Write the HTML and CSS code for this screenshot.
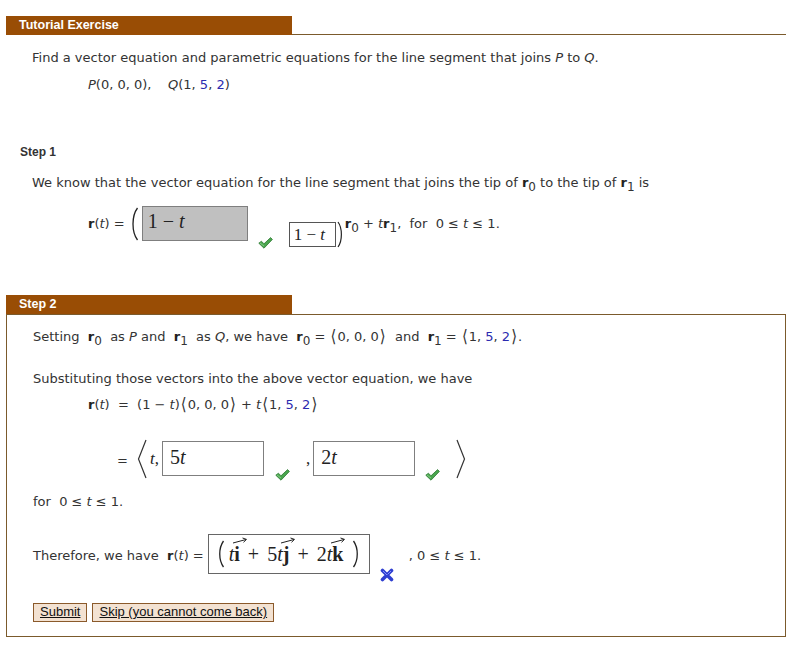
FILE: index.html
```html
<!DOCTYPE html>
<html>
<head>
<meta charset="utf-8">
<link rel="stylesheet" href="styles.css">
</head>
<body>
<div class="page">
  <div class="head">
    <div class="tab">Tutorial Exercise</div>
    <div class="rule"></div>
  </div>
  <div class="intro">
    <p class="q">Find a vector equation and parametric equations for the line segment that joins <i>P</i> to <i>Q</i>.</p>
    <p class="pts"><i>P</i>(0, 0, 0), &nbsp; &nbsp;<i>Q</i>(1, <span class="bl">5</span>, <span class="bl">2</span>)</p>
  </div>

  <div class="step1">
    <div class="steplabel">Step 1</div>
    <p class="know">We know that the vector equation for the line segment that joins the tip of <b class="vr">r</b><sub>0</sub> to the tip of <b class="vr">r</b><sub>1</sub> is</p>
    <div class="eq1">
      <span class="lhs"><b class="vr">r</b>(<i>t</i>) =</span>
      <svg class="paren-l" viewBox="0 0 9 34" width="9" height="34"><path d="M7.5 1 C1.5 9 1.5 25 7.5 33" fill="none" stroke="#222" stroke-width="1.3"/></svg>
      <span class="box gray"><span class="m">1 − <i>t</i></span></span>
      <svg class="chk c1" viewBox="0 0 15 12" width="15" height="12"><path d="M0.8 6.2 L3.4 4.2 L6 6.8 L12.6 0.6 L14.4 2.4 L6 11.2 Z" fill="#4aa64e" stroke="#2f7a33" stroke-width="0.8" stroke-linejoin="round"/><path d="M2 6 L6 9" stroke="#8fd592" stroke-width="0.8"/></svg>
      <span class="box sm"><span class="m ms">1 − <i>t</i></span></span>
      <svg class="paren-r" viewBox="0 0 7 27" width="7" height="27"><path d="M1 1 C5.5 7 5.5 20 1 26" fill="none" stroke="#222" stroke-width="1.2"/></svg>
      <span class="rest"><b class="vr">r</b><sub>0</sub> + <i>t</i><b class="vr">r</b><sub>1</sub>, &nbsp;for &nbsp;0 ≤ <i>t</i> ≤ 1.</span>
    </div>
  </div>

  <div class="step2">
    <div class="head2"><div class="tab">Step 2</div></div>
    <div class="panel">
      <p class="set">Setting &nbsp;<b class="vr">r</b><sub>0</sub> &nbsp;as <i>P</i> and &nbsp;<b class="vr">r</b><sub>1</sub> &nbsp;as <i>Q</i>, we have &nbsp;<b class="vr">r</b><sub>0</sub> = <span class="ab">⟨</span>0, 0, 0<span class="ab">⟩</span> &nbsp;and &nbsp;<b class="vr">r</b><sub>1</sub> = <span class="ab">⟨</span>1, <span class="bl">5</span>, <span class="bl">2</span><span class="ab">⟩</span>.</p>
      <p class="sub">Substituting those vectors into the above vector equation, we have</p>
      <p class="rt"><b class="vr">r</b>(<i>t</i>) &nbsp;= &nbsp;(1 − <i>t</i>)<span class="ab">⟨</span>0, 0, 0<span class="ab">⟩</span> + <i>t</i><span class="ab">⟨</span>1, <span class="bl">5</span>, <span class="bl">2</span><span class="ab">⟩</span></p>
      <div class="eq2">
        <span class="eqs">=</span>
        <svg class="ang al" viewBox="0 0 10 40" width="10" height="40"><polyline points="9,1 1.5,20 9,39" fill="none" stroke="#333" stroke-width="1.2"/></svg>
        <span class="tc"><i>t</i>,</span>
        <span class="box wb"><span class="m">5<i>t</i></span></span>
        <svg class="chk c2" viewBox="0 0 15 12" width="15" height="12"><path d="M0.8 6.2 L3.4 4.2 L6 6.8 L12.6 0.6 L14.4 2.4 L6 11.2 Z" fill="#4aa64e" stroke="#2f7a33" stroke-width="0.8" stroke-linejoin="round"/><path d="M2 6 L6 9" stroke="#8fd592" stroke-width="0.8"/></svg>
        <span class="cm">,</span>
        <span class="box wb b2"><span class="m">2<i>t</i></span></span>
        <svg class="chk c3" viewBox="0 0 15 12" width="15" height="12"><path d="M0.8 6.2 L3.4 4.2 L6 6.8 L12.6 0.6 L14.4 2.4 L6 11.2 Z" fill="#4aa64e" stroke="#2f7a33" stroke-width="0.8" stroke-linejoin="round"/><path d="M2 6 L6 9" stroke="#8fd592" stroke-width="0.8"/></svg>
        <svg class="ang ar" viewBox="0 0 10 40" width="10" height="40"><polyline points="1,1 8.5,20 1,39" fill="none" stroke="#333" stroke-width="1.2"/></svg>
      </div>
      <p class="for">for &nbsp;0 ≤ <i>t</i> ≤ 1.</p>
      <div class="eq3">
        <span class="thf">Therefore, we have &nbsp;<b class="vr">r</b>(<i>t</i>) =</span>
        <span class="box big">
          <svg class="bp" viewBox="0 0 8 28" width="8" height="28"><path d="M6.5 1 C1.5 8 1.5 20 6.5 27" fill="none" stroke="#222" stroke-width="1.3"/></svg>
          <span class="v"><i>t</i><b>i</b><svg class="arr" viewBox="0 0 16 8" width="16" height="8"><path d="M1 6 L14 2.5 M10.5 1 L14.5 2.4 L11.5 5.3" fill="none" stroke="#222" stroke-width="1"/></svg></span>
          <span class="op">+</span>
          <span class="n">5</span><span class="v"><i>t</i><b>j</b><svg class="arr" viewBox="0 0 16 8" width="16" height="8"><path d="M1 6 L14 2.5 M10.5 1 L14.5 2.4 L11.5 5.3" fill="none" stroke="#222" stroke-width="1"/></svg></span>
          <span class="op">+</span>
          <span class="n">2</span><span class="v"><i>t</i><b>k</b><svg class="arr" viewBox="0 0 16 8" width="16" height="8"><path d="M1 6 L14 2.5 M10.5 1 L14.5 2.4 L11.5 5.3" fill="none" stroke="#222" stroke-width="1"/></svg></span>
          <svg class="bp bpr" viewBox="0 0 8 28" width="8" height="28"><path d="M1.5 1 C6.5 8 6.5 20 1.5 27" fill="none" stroke="#222" stroke-width="1.3"/></svg>
        </span>
        <svg class="xx" viewBox="0 0 14 14" width="14" height="14"><path d="M2.5 2.5 L11.5 11.5 M11.5 2.5 L2.5 11.5" stroke="#2f3fd0" stroke-width="3.6" stroke-linecap="round"/><path d="M3 3 L7 7 M11 3 L7.5 6.5" stroke="#7f8cff" stroke-width="1"/></svg>
        <span class="tail">, 0 ≤ <i>t</i> ≤ 1.</span>
      </div>
      <div class="btns">
        <span class="btn">Submit</span>
        <span class="btn">Skip (you cannot come back)</span>
      </div>
    </div>
  </div>
</div>
</body>
</html>
```
FILE: styles.css
```css
* { box-sizing: border-box; }
body {
  margin: 0;
  background: #fff;
  font-family: "DejaVu Sans", Verdana, sans-serif;
  font-size: 13px;
  color: #333;
}
p { margin: 0; line-height: 16px; }
sub { font-size: 12px; vertical-align: -4px; line-height: 0; }
.bl { color: #2b2bb0; }
.vr { font-weight: bold; color: #222; }
.ab { display: inline-block; font-size: 15px; line-height: 14px; margin: 0 1px; transform: scaleY(1.15); }

.page { width: 780px; margin-left: 6px; padding-top: 16px; }

.head { display: flex; height: 19px; }
.tab {
  width: 286px; height: 19px;
  background: #994d05; color: #fff;
  font: bold 12.5px "Liberation Sans", Arial, sans-serif;
  line-height: 19px; padding-left: 13px;
}
.head .rule { flex: 1; border-bottom: 1px solid #7b5a2c; }

.intro { padding-left: 26px; }
.q { margin-top: 15px; }
.pts { margin-top: 11px; padding-left: 56px; }

.steplabel {
  margin-top: 52px; padding-left: 14px;
  font: bold 12px "Liberation Sans", Arial, sans-serif;
  line-height: 14px; color: #333;
}
.know { margin-top: 16px; padding-left: 26px; }

.eq1 { display: flex; align-items: flex-start; height: 46px; margin-top: 13px; padding-left: 82px; }
.lhs { margin-top: 12px; line-height: 16px; }
.paren-l { display: block; margin-left: 5px; margin-top: 3px; }
.box { display: inline-block; border: 1px solid #7f7f7f; background: #fff; }
.m { font: 20px "Liberation Serif", serif; color: #222; line-height: 22px; display: block; padding: 3px 0 0 5px; }
.gray { background: #c0c0c0; width: 106px; height: 35px; margin-left: 3px; margin-top: 2px; }
.chk { display: block; }
.c1 { margin-left: 10px; margin-top: 33px; }
.sm { width: 47px; height: 25px; margin-left: 16px; margin-top: 18px; border-color: #555; }
.ms { font-size: 17px; line-height: 20px; padding: 2px 0 0 4px; }
.paren-r { display: block; margin-top: 17px; margin-left: 1px; }
.rest { margin-top: 12px; line-height: 16px; margin-left: 1px; }

.step2 { margin-top: 45px; }
.head2 { display: flex; height: 19px; }
.panel {
  border: 1px solid #7b5a2c;
  padding: 0 0 14px 26px;
}
.set { margin-top: 14px; }
.sub { margin-top: 26px; }
.rt { margin-top: 10px; padding-left: 55px; }

.eq2 { display: flex; align-items: flex-start; height: 42px; margin-top: 26px; }
.eqs { margin-left: 84px; margin-top: 14px; line-height: 16px; }
.ang { display: block; }
.al { margin-left: 9px; }
.tc { font: 17px "Liberation Serif", serif; color: #222; line-height: 20px; margin-top: 10px; margin-left: 3px; }
.wb { width: 102px; height: 35px; margin-left: 3px; margin-top: 2px; }
.wb .m { padding-left: 7px; padding-top: 4px; }
.c2 { margin-left: 11px; margin-top: 30px; }
.cm { font: 17px "Liberation Serif", serif; line-height: 20px; margin-top: 10px; margin-left: 16px; color: #222; }
.b2 { margin-left: 3px; }
.c3 { margin-left: 10px; margin-top: 30px; }
.ar { margin-left: 16px; }

.for { margin-top: 13px; }

.eq3 { display: flex; align-items: flex-start; height: 48px; margin-top: 24px; }
.thf { margin-top: 14px; line-height: 16px; }
.big {
  width: 162px; height: 40px; margin-left: 4px;
  display: flex; align-items: center; padding-left: 8px;
  font: 20px "Liberation Serif", serif; color: #222;
  border-color: #666;
}
.bp { display: block; }
.v { position: relative; display: inline-block; }
.v b { font-weight: bold; }
.arr { position: absolute; left: 3px; top: -6px; }
.op { margin: 0 8px; }
.bp + .v { margin-left: 4px; }
.v + .bpr { margin-left: 9px; }
.xx { display: block; margin-left: 10px; margin-top: 34px; }
.tail { margin-top: 14px; line-height: 16px; margin-left: 15px; }

.btns { display: flex; gap: 5px; margin-top: 21px; }
.btn {
  display: inline-block;
  height: 19px; line-height: 17px;
  padding: 0 6px;
  background: #f3e2d2;
  border: 1px solid #8b5a2b;
  font: 13px "Liberation Sans", Arial, sans-serif;
  color: #111;
  text-decoration: underline;
}
```
